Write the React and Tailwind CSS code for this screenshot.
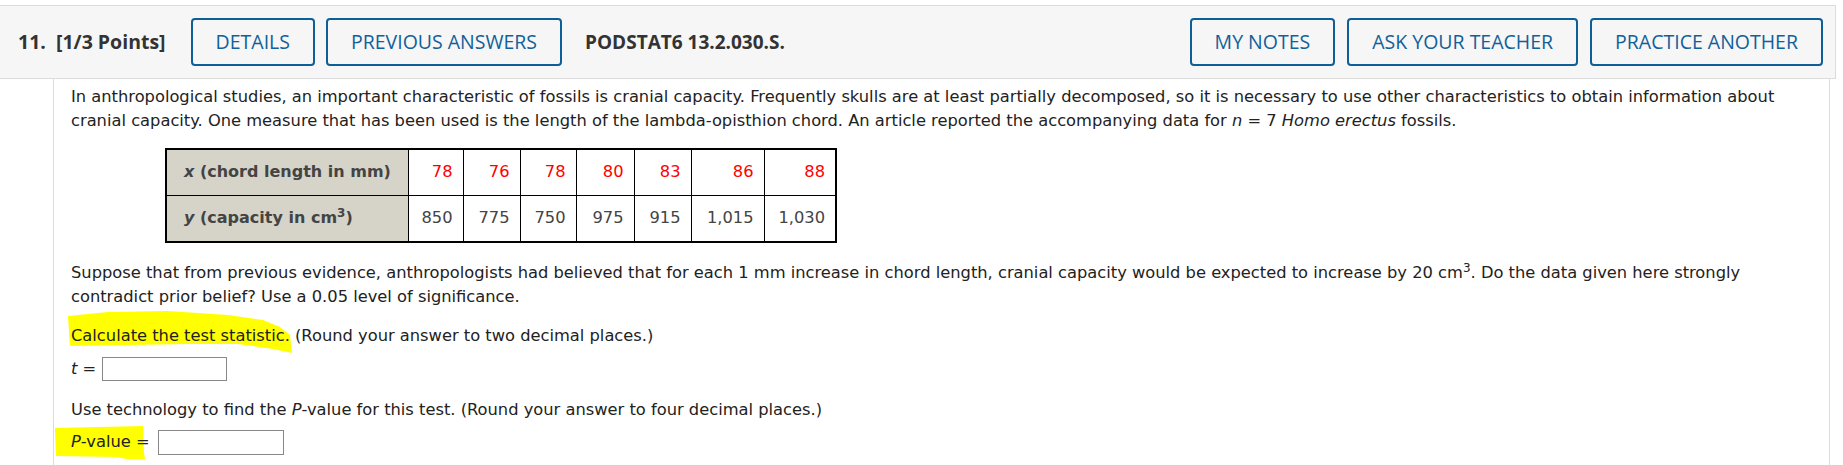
import React from 'react';

const xs = ['78', '76', '78', '80', '83', '86', '88'];
const ys = ['850', '775', '750', '975', '915', '1,015', '1,030'];
const colW = ['w-[55px]', 'w-[57px]', 'w-[56px]', 'w-[58px]', 'w-[57px]', 'w-[73px]', 'w-[72px]'];

function HeadButton({ children }) {
    return (
        <button className="h-[48px] px-[23px] rounded-[4px] border-2 border-[#0e5e98] text-[#11609a] text-[19.5px] uppercase bg-[#f6f6f6]">
            {children}
        </button>
    );
}

export default function App() {
    return (
        <div className="w-[1843px] h-[465px] bg-white overflow-hidden pt-[5px] font-['Open_Sans',sans-serif]">
            {/* question header */}
            <div className="w-[1836px] h-[74px] bg-[#f6f6f6] border-y border-r border-[#dcdcdc] flex items-center pl-[18px]">
                <span className="text-[19.5px] font-bold text-[#333] whitespace-pre">11.  [1/3 Points]</span>
                <div className="flex gap-[11px] ml-[25px]">
                    <HeadButton>Details</HeadButton>
                    <HeadButton>Previous Answers</HeadButton>
                </div>
                <span className="ml-[23px] text-[19px] font-bold text-[#333]">PODSTAT6 13.2.030.S.</span>
                <div className="flex gap-[12px] ml-auto mr-[12px]">
                    <HeadButton>My Notes</HeadButton>
                    <HeadButton>Ask Your Teacher</HeadButton>
                    <HeadButton>Practice Another</HeadButton>
                </div>
            </div>

            {/* question body */}
            <div className="ml-[53px] w-[1777px] h-[400px] border-x border-[#dcdcdc] pl-[17px] pr-[20px] pt-[6px] text-[16.3px] leading-[24px] text-[#222] font-['DejaVu_Sans',sans-serif]">
                <p>
                    In anthropological studies, an important characteristic of fossils is cranial capacity. Frequently skulls are at least partially decomposed, so it is necessary to use other characteristics to obtain information about cranial capacity. One measure that has been used is the length of the lambda-opisthion chord. An article reported the accompanying data for <i>n</i> = 7 <i>Homo erectus</i> fossils.
                </p>

                <table className="ml-[94px] mt-[15px] border-collapse border-2 border-black">
                    <tbody>
                        <tr className="h-[46px]">
                            <td className="w-[242px] bg-[#d6d3c9] border border-black pl-[17px] text-[16px] font-bold text-[#444]">
                                <i>x</i> (chord length in mm)
                            </td>
                            {xs.map((v, i) => (
                                <td key={i} className={`${colW[i]} border border-black text-right pr-[10px] text-[#ff0000]`}>{v}</td>
                            ))}
                        </tr>
                        <tr className="h-[47px]">
                            <td className="bg-[#d6d3c9] border border-black pl-[17px] text-[16px] font-bold text-[#444]">
                                <i>y</i> (capacity in cm<sup className="text-[12px]">3</sup>)
                            </td>
                            {ys.map((v, i) => (
                                <td key={i} className="border border-black text-right pr-[10px] text-[#444]">{v}</td>
                            ))}
                        </tr>
                    </tbody>
                </table>

                <p className="mt-[18px]">
                    Suppose that from previous evidence, anthropologists had believed that for each 1 mm increase in chord length, cranial capacity would be expected to increase by 20 cm<sup className="text-[12px]">3</sup>. Do the data given here strongly contradict prior belief? Use a 0.05 level of significance.
                </p>

                <p className="mt-[15px] relative isolate">
                    {/* yellow marker stroke */}
                    <svg className="absolute left-[-3px] top-[-17px] -z-10" width="225" height="47" viewBox="0 0 225 47">
                        <polygon fill="#ffff00" points="0,9 40,5 100,4 160,8 195,13 212,20 222,28 224,46 205,42 170,37 120,37 60,38 2,39" />
                    </svg>
                    Calculate the test statistic. (Round your answer to two decimal places.)
                </p>
                <div className="mt-[9px] flex items-center h-[24px]">
                    <i className="mr-[5px]">t</i>
                    <span>=</span>
                    <span className="ml-[6px] w-[125px] h-[24px] border border-[#888] bg-white" />
                </div>

                <p className="mt-[17px]">
                    Use technology to find the <i>P</i>-value for this test. (Round your answer to four decimal places.)
                </p>
                <div className="mt-[7px] flex items-center h-[26px] relative isolate">
                    <svg className="absolute left-[-16px] top-[-3px] -z-10" width="92" height="34" viewBox="0 0 92 34">
                        <polygon fill="#ffff00" points="0,2 88,0 89,27 90,33 72,33 60,31 1,30" />
                    </svg>
                    <span><i>P</i>-value =</span>
                    <span className="ml-[8px] w-[126px] h-[25px] border border-[#888] bg-white" />
                </div>
            </div>
        </div>
    );
}
